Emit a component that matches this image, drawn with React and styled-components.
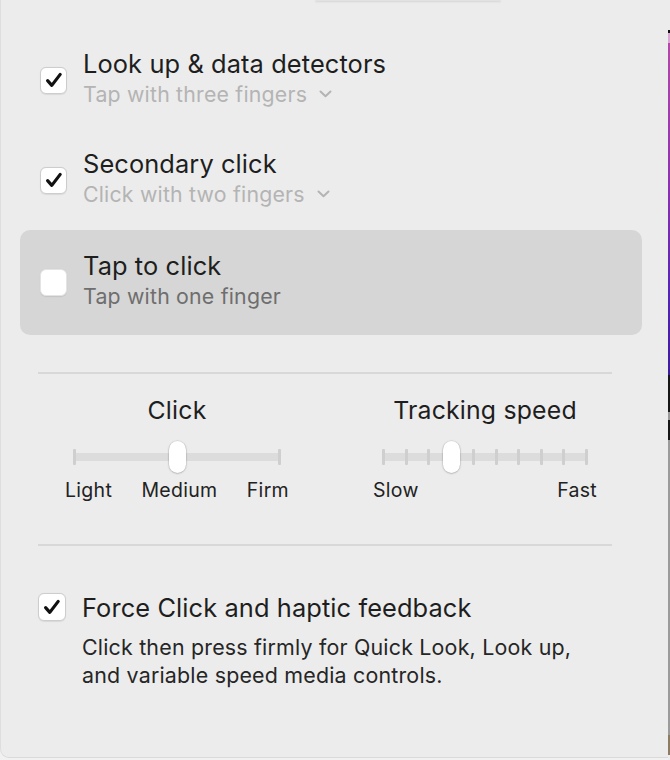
import React from "react";
import styled, { createGlobalStyle } from "styled-components";

const Global = createGlobalStyle`
  html, body { margin: 0; padding: 0; background: #f1f1f1; }
  body { font-family: Inter, "Noto Sans", "Liberation Sans", sans-serif; -webkit-font-smoothing: antialiased; }
`;

const Screen = styled.div`
  display: flex;
  width: 670px;
  height: 760px;
  overflow: hidden;
`;

const Panel = styled.div`
  flex: 1;
  height: 758px;
  display: flex;
  flex-direction: column;
  background: #ececec;
  border-left: 1px solid #dedede;
  border-bottom: 1px solid #dadada;
  border-bottom-left-radius: 9px;
  box-sizing: border-box;
  color: #1f1f1f;
`;

const Header = styled.div`
  height: 30px;
  display: flex;
  justify-content: flex-start;
`;

const TabStub = styled.div`
  margin-left: 314px;
  width: 186px;
  height: 1px;
  background: #e2e2e2;
  box-shadow: 0 1px 2px rgba(0, 0, 0, 0.14);
  border-radius: 0 0 3px 3px;
`;

const Rows = styled.div`
  display: flex;
  flex-direction: column;
  margin: 0 26px 0 19px;
`;

const Row = styled.div`
  display: flex;
  align-items: center;
  gap: 16px;
  padding: 0 20px;
  height: ${(p) => (p.$active ? 105 : 100)}px;
  border-radius: 10px;
  background: ${(p) => (p.$active ? "#d6d6d6" : "transparent")};
`;

const Box = styled.div`
  flex: none;
  width: 27px;
  height: 27px;
  box-sizing: border-box;
  border-radius: 6px;
  background: #ffffff;
  border: 1px solid ${(p) => (p.$checked ? "#cdcdcd" : "#e4e4e4")};
  box-shadow: 0 0.5px 1px rgba(0, 0, 0, 0.08);
  display: flex;
  align-items: center;
  justify-content: center;
`;

const TextBlock = styled.div`
  display: flex;
  flex-direction: column;
  margin-top: ${(p) => p.$shift || 0}px;
`;

const Title = styled.div`
  font-size: 25.4px;
  line-height: 30px;
  color: #1e1e1e;
  letter-spacing: 0.1px;
`;

const Sub = styled.div`
  display: flex;
  align-items: center;
  gap: 12px;
  font-size: 21.3px;
  line-height: 30px;
  color: ${(p) => (p.$dim ? "#b4b4b4" : "#6e6e6e")};
  letter-spacing: 0.2px;
`;

const Rule = styled.div`
  margin: ${(p) => p.$top}px 56px 0 37px;
  height: 2px;
  background: #d8d8d8;
`;

const Sliders = styled.div`
  display: flex;
  gap: 84px;
  margin: 21px 0 0 64px;
`;

const SliderCol = styled.div`
  width: 224px;
  display: flex;
  flex-direction: column;
  align-items: center;
`;

const SliderTitle = styled.div`
  font-size: 24.8px;
  line-height: 30px;
  color: #1e1e1e;
  letter-spacing: 0.2px;
`;

const Track = styled.div`
  position: relative;
  margin-top: 16px;
  width: ${(p) => p.$w}px;
  height: 32px;
  display: flex;
  align-items: center;
  justify-content: space-between;
  &::before {
    content: "";
    position: absolute;
    left: 0;
    right: 0;
    top: 12px;
    height: 8px;
    background: #dcdcdc;
    border-radius: 1px;
  }
`;

const Tick = styled.div`
  position: relative;
  width: 3px;
  height: 16px;
  background: #cfcfcf;
  border-radius: 1px;
  opacity: ${(p) => (p.$hidden ? 0 : 1)};
`;

const Thumb = styled.div`
  position: absolute;
  top: 0;
  width: 17px;
  height: 32px;
  margin-left: -8px;
  border-radius: 9px;
  background: #ffffff;
  box-shadow: 0 0.5px 2px rgba(0, 0, 0, 0.3), 0 0 0 0.5px rgba(0, 0, 0, 0.08);
`;

const Labels = styled.div`
  margin-top: 4px;
  width: 224px;
  display: flex;
  justify-content: space-between;
  font-size: 19.5px;
  line-height: 26px;
  color: #222;
  letter-spacing: 0.3px;
`;

const ForceRow = styled.div`
  display: flex;
  align-items: flex-start;
  gap: 16px;
  margin: 47px 0 0 37px;
`;

const ForceBox = styled(Box)`
  width: 28px;
  height: 28px;
  margin-top: 0px;
`;

const Desc = styled.div`
  margin-top: 10px;
  font-size: 21.4px;
  line-height: 28px;
  color: #262626;
  letter-spacing: 0.2px;
`;

const Strip = styled.div`
  width: 2px;
  height: 760px;
  display: flex;
  flex-direction: column;
`;

const Seg = styled.div`
  height: ${(p) => p.$h}px;
  background: ${(p) => p.$bg};
`;

const Check = () => (
  <svg width="20" height="20" viewBox="0 0 20 20">
    <path
      d="M3.6 10.6 L7.8 15.4 L16.2 4.4"
      fill="none"
      stroke="#111"
      strokeWidth="3.2"
      strokeLinecap="round"
      strokeLinejoin="round"
    />
  </svg>
);

const Chevron = () => (
  <svg width="13" height="8" viewBox="0 0 13 8">
    <path
      d="M1.5 1.5 L6.5 6.2 L11.5 1.5"
      fill="none"
      stroke="#b4b4b4"
      strokeWidth="2"
      strokeLinecap="round"
      strokeLinejoin="round"
    />
  </svg>
);

const options = [
  { title: "Look up & data detectors", sub: "Tap with three fingers", checked: true, menu: true },
  { title: "Secondary click", sub: "Click with two fingers", checked: true, menu: true },
  { title: "Tap to click", sub: "Tap with one finger", checked: false, menu: false, active: true },
];

function Slider({ width, ticks, value, title, labels }) {
  const left = (value / (ticks - 1)) * (width - 3) + 1.5;
  return (
    <SliderCol>
      <SliderTitle>{title}</SliderTitle>
      <Track $w={width}>
        {Array.from({ length: ticks }).map((_, i) => (
          <Tick key={i} $hidden={ticks === 3 && i === 1} />
        ))}
        <Thumb style={{ left }} />
      </Track>
      <Labels>
        {labels.map((l) => (
          <span key={l}>{l}</span>
        ))}
      </Labels>
    </SliderCol>
  );
}

export default function App() {
  return (
    <>
      <Global />
      <Screen>
        <Panel>
          <Header>
            <TabStub />
          </Header>
          <Rows>
            {options.map((o) => (
              <Row key={o.title} $active={o.active}>
                <Box $checked={o.checked}>{o.checked && <Check />}</Box>
                <TextBlock $shift={-3}>
                  <Title>{o.title}</Title>
                  <Sub $dim={o.menu}>
                    {o.sub}
                    {o.menu && <Chevron />}
                  </Sub>
                </TextBlock>
              </Row>
            ))}
          </Rows>
          <Rule $top={37} />
          <Sliders>
            <Slider title="Click" width={208} ticks={3} value={1} labels={["Light", "Medium", "Firm"]} />
            <Slider title="Tracking speed" width={206} ticks={10} value={3} labels={["Slow", "Fast"]} />
          </Sliders>
          <Rule $top={41} />
          <ForceRow>
            <ForceBox $checked>
              <Check />
            </ForceBox>
            <TextBlock>
              <Title>Force Click and haptic feedback</Title>
              <Desc>
                Click then press firmly for Quick Look, Look up,
                <br />
                and variable speed media controls.
              </Desc>
            </TextBlock>
          </ForceRow>
        </Panel>
        <Strip>
          <Seg $h={30} $bg="#ececec" />
          <Seg $h={3} $bg="#111" />
          <Seg $h={10} $bg="#d9a6d6" />
          <Seg $h={332} $bg="linear-gradient(#b448a8, #8a30b0 45%, #5624b4 75%, #3e1c9c)" />
          <Seg $h={37} $bg="#161616" />
          <Seg $h={8} $bg="#9a9a9a" />
          <Seg $h={20} $bg="#161616" />
          <Seg $h={295} $bg="#9b9b9b" />
          <Seg $h={20} $bg="#8c7c62" />
          <Seg $h={5} $bg="#ececec" />
        </Strip>
      </Screen>
    </>
  );
}
